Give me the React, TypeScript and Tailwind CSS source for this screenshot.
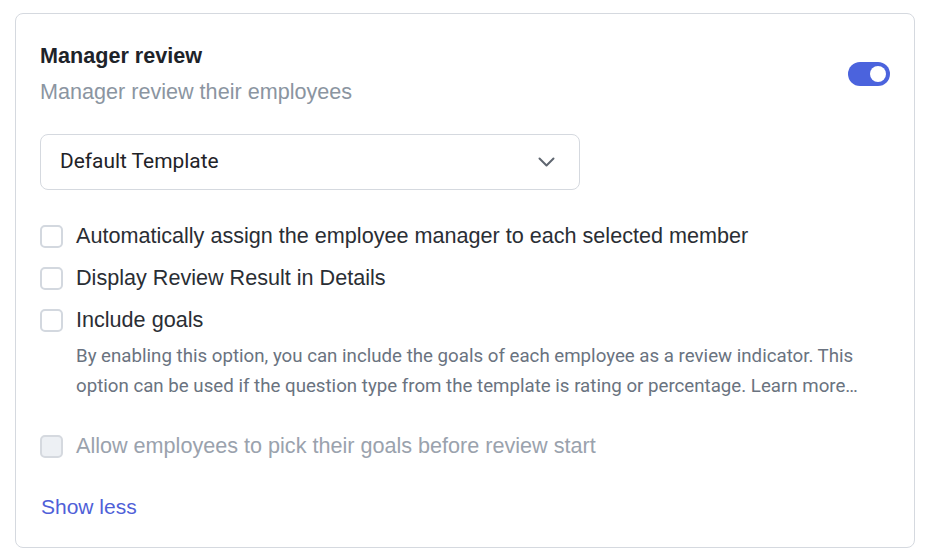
import { useState } from "react";

function Checkbox({ disabled }: { disabled?: boolean }) {
  return (
    <span
      className={
        "inline-block h-[23px] w-[23px] shrink-0 rounded-[5px] border-2 " +
        (disabled ? "border-[#d5d9df] bg-[#edf0f4]" : "border-[#d3d8df] bg-white")
      }
    />
  );
}

export default function App() {
  const [enabled, setEnabled] = useState(true);
  const options = [
    "Automatically assign the employee manager to each selected member",
    "Display Review Result in Details",
  ];

  return (
    <div className="min-h-screen bg-white pl-[15px] pt-[13px]" style={{ fontFamily: '"Liberation Sans", Arial, sans-serif' }}>
      <div className="w-[900px] rounded-[8px] border border-[#d5d9df] px-[24px] pt-[24px] pb-[24px]">
        {/* header */}
        <div className="flex items-center justify-between">
          <div>
            <h2 className="text-[21.6px] font-bold leading-[36px] text-[#1e2329]">Manager review</h2>
            <p className="text-[21.6px] leading-[36px] text-[#8b95a1]">Manager review their employees</p>
          </div>
          <button
            onClick={() => setEnabled(!enabled)}
            className={
              "flex h-[24px] w-[42px] items-center rounded-full px-[4px] " +
              (enabled ? "justify-end bg-[#4b63dd]" : "justify-start bg-[#d1d5db]")
            }
          >
            <span className="h-[16px] w-[16px] rounded-full bg-white" />
          </button>
        </div>

        {/* template select */}
        <div className="mt-[24px] flex h-[56px] w-[540px] items-center justify-between rounded-[8px] border border-[#d5d9df] pl-[19px] pr-[24px]">
          <span className="text-[20.9px] text-[#1f2328]" style={{ fontFamily: "Roboto, sans-serif" }}>
            Default Template
          </span>
          <svg width="17" height="10" viewBox="0 0 17 10" fill="none">
            <path d="M1.5 1.5 L8.5 8.5 L15.5 1.5" stroke="#5f6670" strokeWidth="2" strokeLinecap="round" strokeLinejoin="round" />
          </svg>
        </div>

        {/* options */}
        <div className="mt-[25px]">
          {options.map((o) => (
            <label key={o} className="flex h-[42px] items-center gap-[13px]">
              <Checkbox />
              <span className="text-[21.6px] text-[#2a2e34]">{o}</span>
            </label>
          ))}
          <label className="flex h-[42px] items-center gap-[13px]">
            <Checkbox />
            <span className="text-[21.6px] text-[#2a2e34]">Include goals</span>
          </label>
          <p
            className="pl-[36px] text-[18.7px] leading-[30px] text-[#6a7380]"
            style={{ fontFamily: "Roboto, sans-serif" }}
          >
            By enabling this option, you can include the goals of each employee as a review indicator. This
            <br />
            option can be used if the question type from the template is rating or percentage. Learn more…
          </p>
          <label className="mt-[24px] flex h-[42px] items-center gap-[13px]">
            <Checkbox disabled />
            <span className="text-[21.6px] text-[#9aa2ad]">Allow employees to pick their goals before review start</span>
          </label>
        </div>

        <button className="mt-[24px] block pl-[1px] text-[21px] leading-[32px] text-[#4f5fd8]">Show less</button>
      </div>
    </div>
  );
}
